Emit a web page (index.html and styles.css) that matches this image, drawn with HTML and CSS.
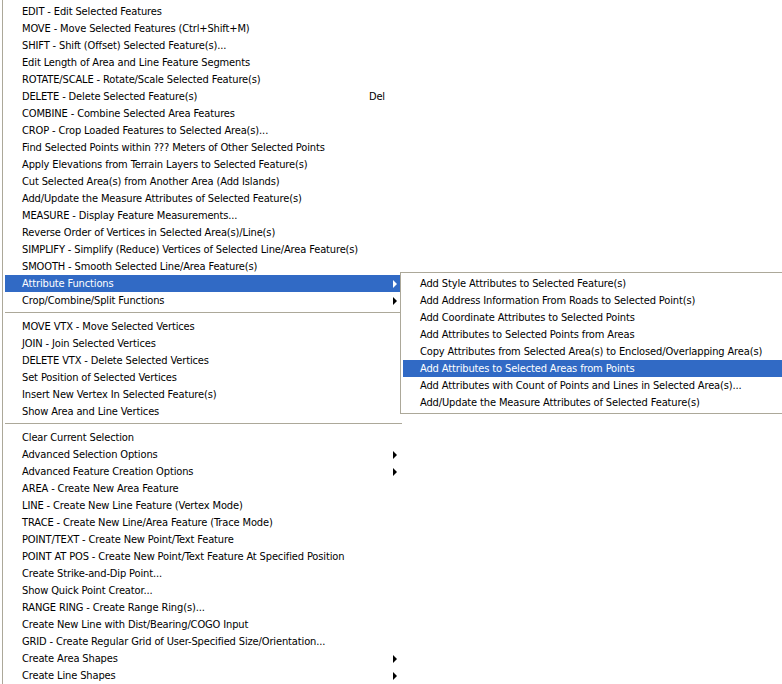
FILE: index.html
```html
<!DOCTYPE html>
<html lang="en">
<head>
    <meta charset="UTF-8">
    <title>Edit Menu</title>
    <link rel="stylesheet" href="styles.css">
</head>
<body>
    <div class="menu main-menu">
        <div class="item">EDIT - Edit Selected Features</div>
        <div class="item">MOVE - Move Selected Features (Ctrl+Shift+M)</div>
        <div class="item">SHIFT - Shift (Offset) Selected Feature(s)...</div>
        <div class="item">Edit Length of Area and Line Feature Segments</div>
        <div class="item">ROTATE/SCALE - Rotate/Scale Selected Feature(s)</div>
        <div class="item"><span>DELETE - Delete Selected Feature(s)</span><span class="shortcut">Del</span></div>
        <div class="item">COMBINE - Combine Selected Area Features</div>
        <div class="item">CROP - Crop Loaded Features to Selected Area(s)...</div>
        <div class="item">Find Selected Points within ??? Meters of Other Selected Points</div>
        <div class="item">Apply Elevations from Terrain Layers to Selected Feature(s)</div>
        <div class="item">Cut Selected Area(s) from Another Area (Add Islands)</div>
        <div class="item">Add/Update the Measure Attributes of Selected Feature(s)</div>
        <div class="item">MEASURE - Display Feature Measurements...</div>
        <div class="item">Reverse Order of Vertices in Selected Area(s)/Line(s)</div>
        <div class="item">SIMPLIFY - Simplify (Reduce) Vertices of Selected Line/Area Feature(s)</div>
        <div class="item">SMOOTH - Smooth Selected Line/Area Feature(s)</div>
        <div class="item sub active">Attribute Functions</div>
        <div class="item sub">Crop/Combine/Split Functions</div>
        <div class="sep"></div>
        <div class="item">MOVE VTX - Move Selected Vertices</div>
        <div class="item">JOIN - Join Selected Vertices</div>
        <div class="item">DELETE VTX - Delete Selected Vertices</div>
        <div class="item">Set Position of Selected Vertices</div>
        <div class="item">Insert New Vertex In Selected Feature(s)</div>
        <div class="item">Show Area and Line Vertices</div>
        <div class="sep"></div>
        <div class="item">Clear Current Selection</div>
        <div class="item sub">Advanced Selection Options</div>
        <div class="item sub">Advanced Feature Creation Options</div>
        <div class="item">AREA - Create New Area Feature</div>
        <div class="item">LINE - Create New Line Feature (Vertex Mode)</div>
        <div class="item">TRACE - Create New Line/Area Feature (Trace Mode)</div>
        <div class="item">POINT/TEXT - Create New Point/Text Feature</div>
        <div class="item">POINT AT POS - Create New Point/Text Feature At Specified Position</div>
        <div class="item">Create Strike-and-Dip Point...</div>
        <div class="item">Show Quick Point Creator...</div>
        <div class="item">RANGE RING - Create Range Ring(s)...</div>
        <div class="item">Create New Line with Dist/Bearing/COGO Input</div>
        <div class="item">GRID - Create Regular Grid of User-Specified Size/Orientation...</div>
        <div class="item sub">Create Area Shapes</div>
        <div class="item sub">Create Line Shapes</div>
    </div>

    <div class="menu sub-menu">
        <div class="item">Add Style Attributes to Selected Feature(s)</div>
        <div class="item">Add Address Information From Roads to Selected Point(s)</div>
        <div class="item">Add Coordinate Attributes to Selected Points</div>
        <div class="item">Add Attributes to Selected Points from Areas</div>
        <div class="item">Copy Attributes from Selected Area(s) to Enclosed/Overlapping Area(s)</div>
        <div class="item active">Add Attributes to Selected Areas from Points</div>
        <div class="item">Add Attributes with Count of Points and Lines in Selected Area(s)...</div>
        <div class="item">Add/Update the Measure Attributes of Selected Feature(s)</div>
    </div>
</body>
</html>
```

FILE: styles.css
```css
* { margin: 0; padding: 0; box-sizing: border-box; }
html, body { height: 100%; }
body {
    background: #fff;
    color: #000;
    font-family: "DejaVu Sans", sans-serif;
    font-stretch: condensed;
    font-size: 11px;
    letter-spacing: -0.13px;
    overflow: hidden;
    position: relative;
}
.menu { background: #fff; }
.main-menu {
    margin-left: 2px;
    width: 400px;
    padding: 3px 0 0 2px;
    border-left: 1px solid #aca899;
}
.item {
    display: flex;
    justify-content: space-between;
    height: 17px;
    line-height: 17px;
    padding: 0 17px;
    white-space: nowrap;
    position: relative;
}
.item.active { background: #316ac5; color: #fff; }
.item.sub:after {
    content: "";
    position: absolute;
    right: 5px;
    top: 5px;
    border-left: 4px solid #000;
    border-top: 4px solid transparent;
    border-bottom: 4px solid transparent;
}
.item.sub.active:after { border-left-color: #fff; }
.sep {
    height: 1px;
    background: #aca899;
    margin: 3px 0 5px;
}
.sub-menu {
    position: absolute;
    left: 400px;
    top: 272px;
    width: 420px;
    padding: 2px;
    border: 1px solid #aca899;
}
```
